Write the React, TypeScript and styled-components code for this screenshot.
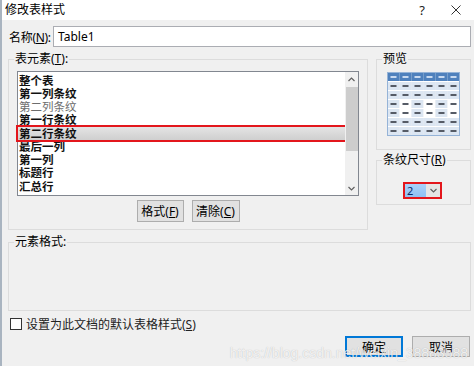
import React from 'react'
import styled, { createGlobalStyle } from 'styled-components'

const GlobalStyle = createGlobalStyle`
  html, body { margin: 0; padding: 0; }
  body { background: #f0f0f0; }
`

const uiFont = `"Noto Sans", "Noto Sans CJK SC", sans-serif`

const Dialog = styled.div`
  position: relative;
  width: 474px;
  height: 366px;
  box-sizing: border-box;
  border-left: 2px solid #a9b4c0;
  background: #f0f0f0;
  font-family: ${uiFont};
  font-size: 12px;
  color: #000;
  display: flex;
  flex-direction: column;
  overflow: hidden;
`

const TitleBar = styled.div`
  height: 20px;
  background: #fff;
  display: flex;
  align-items: center;
  padding: 0 13px 0 3px;
`

const Title = styled.div`
  flex: 1;
  line-height: 20px;
`

const HelpMark = styled.span`
  font-size: 13px;
  color: #222;
  margin-right: 26px;
`

const Body = styled.div`
  display: flex;
  flex-direction: column;
  padding: 6px 3px 0 6px;
`

const NameRow = styled.div`
  display: flex;
  align-items: center;
  height: 21px;
`

const NameLabel = styled.label`
  width: 45px;
  padding-left: 1px;
  box-sizing: border-box;
  white-space: nowrap;
  letter-spacing: -0.3px;
`

const TextInput = styled.div`
  flex: 1;
  height: 21px;
  box-sizing: border-box;
  border: 1px solid #abadb3;
  background: #fff;
  padding-left: 4px;
  line-height: 19px;
`

const Main = styled.div`
  display: flex;
  gap: 8px;
  margin-top: 4px;
  align-items: flex-start;
`

const Group = styled.fieldset<{ $w?: number }>`
  margin: 0;
  min-width: 0;
  box-sizing: border-box;
  ${p => (p.$w ? `width: ${p.$w}px;` : '')}
  border: 1px solid #dcdcdc;
  padding: 4px 8px 7px 8px;
`

const Legend = styled.legend`
  padding: 0 1px;
  margin-left: -3px;
  line-height: 16px;
  font-size: 12px;
  white-space: nowrap;
`

const ListBox = styled.div`
  height: 125px;
  box-sizing: border-box;
  border: 1px solid #828790;
  background: #fff;
  display: flex;
`

const Items = styled.div`
  flex: 1;
  padding-top: 1.5px;
`

const Item = styled.div<{ $dim?: boolean; $selected?: boolean }>`
  height: 13.25px;
  line-height: 13.25px;
  font-size: 11.5px;
  padding-left: 1px;
  font-weight: ${p => (p.$dim ? 400 : 700)};
  color: ${p => (p.$dim ? '#6d6d6d' : '#111')};
  ${p =>
    p.$selected
      ? `
    background: linear-gradient(#e4e4e4, #cfcfcf);
    outline: 2px solid #e3161c;
  `
      : ''}
`

const ScrollBar = styled.div`
  width: 13px;
  background: #f0f0f0;
  display: flex;
  flex-direction: column;
  align-items: center;
`

const ScrollArrow = styled.div`
  height: 14px;
  display: flex;
  align-items: center;
  justify-content: center;
`

const Thumb = styled.div`
  width: 12px;
  height: 64px;
  background: #cdcdcd;
  margin-top: 1px;
`

const ScrollTrack = styled.div`
  flex: 1;
`

const ButtonRow = styled.div<{ $end?: boolean }>`
  display: flex;
  justify-content: ${p => (p.$end ? 'flex-end' : 'center')};
  gap: ${p => (p.$end ? 9 : 8)}px;
`

const Button = styled.button<{ $w: number; $h: number; $default?: boolean }>`
  width: ${p => p.$w}px;
  height: ${p => p.$h}px;
  box-sizing: border-box;
  padding: 0;
  border: 1px solid ${p => (p.$default ? '#0078d7' : '#adadad')};
  ${p => (p.$default ? 'box-shadow: inset 0 0 0 1px #0078d7;' : '')}
  background: #e1e1e1;
  font-family: ${uiFont};
  font-size: 12px;
  color: #000;
`

const FormatButtons = styled(ButtonRow)`
  margin-top: 4px;
`

const RightColumn = styled.div`
  width: 95px;
  display: flex;
  flex-direction: column;
  gap: 2px;
`

const PreviewBox = styled.div`
  display: flex;
  justify-content: center;
  padding: 1px 0 6px;
  margin-left: -1px;
`

const ComboWrap = styled.div`
  display: flex;
  justify-content: center;
  padding: 12px 0 0;
  margin-left: -2px;
`

const Combo = styled.div`
  display: flex;
  width: 35px;
  height: 13px;
  outline: 2px solid #e3161c;
  background: #fff;
`

const ComboValue = styled.div`
  width: 21px;
  background: linear-gradient(#a9d1fb, #8fc1f3);
  font-size: 11px;
  line-height: 13px;
  padding-left: 2px;
  box-sizing: border-box;
  color: #0a2a66;
`

const ComboArrow = styled.div`
  flex: 1;
  background: #e5e5e5;
  display: flex;
  align-items: center;
  justify-content: center;
`

const FormatGroup = styled(Group)`
  margin-top: 4px;
  height: 77px;
`

const CheckRow = styled.div`
  display: flex;
  align-items: center;
  margin-top: 7px;
  height: 12px;
  padding-left: 2px;
`

const CheckBox = styled.div`
  width: 12px;
  height: 12px;
  box-sizing: border-box;
  border: 1px solid #333;
  background: #fff;
  margin-right: 4px;
`

const CheckLabel = styled.span`
  color: #222;
`

const DialogButtons = styled(ButtonRow)`
  margin-top: 6px;
  padding-right: 1px;
`

const Watermark = styled.div`
  position: absolute;
  right: 6px;
  bottom: 5px;
  font-family: "Liberation Sans", sans-serif;
  font-size: 14px;
  color: rgba(255, 255, 255, 0.8);
  text-shadow: 0 0 1px rgba(0, 0, 0, 0.25);
  pointer-events: none;
`

const Chevron: React.FC<{ up?: boolean }> = ({ up }) => (
  <svg width="7" height="5" viewBox="0 0 7 5">
    <path
      d={up ? 'M0.5 4 L3.5 1 L6.5 4' : 'M0.5 1 L3.5 4 L6.5 1'}
      fill="none"
      stroke="#606060"
      strokeWidth="1.2"
    />
  </svg>
)

const CloseIcon = () => (
  <svg width="10" height="10" viewBox="0 0 10 10">
    <path d="M0.5 0.5 L9.5 9.5 M9.5 0.5 L0.5 9.5" stroke="#333" strokeWidth="1" />
  </svg>
)

const PreviewTable = () => {
  const cols = 6
  const cw = 12
  const rh = 9
  const cells: React.ReactNode[] = []
  for (let r = 0; r < 7; r++) {
    for (let c = 0; c < cols; c++) {
      const x = 0.5 + c * cw
      const y = 0.5 + r * rh
      let fill = '#dce6f2'
      if (r === 0) fill = '#4f81bd'
      else if ((r === 3 || r === 4) && c % 2 === 1) fill = '#ffffff'
      cells.push(<rect key={`r${r}c${c}`} x={x} y={y} width={cw} height={rh} fill={fill} />)
      cells.push(
        <rect
          key={`d${r}c${c}`}
          x={x + 3}
          y={y + 3.5}
          width={6}
          height={2}
          fill={r === 0 ? '#c9daf0' : '#555b66'}
        />
      )
    }
    if (r > 0) {
      cells.push(
        <line key={`l${r}`} x1={0.5} x2={72.5} y1={0.5 + r * rh} y2={0.5 + r * rh} stroke="#ffffff" strokeWidth="1" />
      )
    }
  }
  return (
    <svg width="73" height="64" viewBox="0 0 73 64">
      {cells}
      <rect x={0.5} y={0.5} width={72} height={63} fill="none" stroke="#95b3d7" strokeWidth="1" />
    </svg>
  )
}

const elements = [
  { label: '整个表' },
  { label: '第一列条纹' },
  { label: '第二列条纹', dim: true },
  { label: '第一行条纹' },
  { label: '第二行条纹', selected: true },
  { label: '最后一列' },
  { label: '第一列' },
  { label: '标题行' },
  { label: '汇总行' },
]

export default function App() {
  return (
    <>
      <GlobalStyle />
      <Dialog>
        <TitleBar>
          <Title>修改表样式</Title>
          <HelpMark>?</HelpMark>
          <CloseIcon />
        </TitleBar>
        <Body>
          <NameRow>
            <NameLabel>
              名称(<u>N</u>):
            </NameLabel>
            <TextInput>Table1</TextInput>
          </NameRow>
          <Main>
            <Group $w={360}>
              <Legend>
                表元素(<u>T</u>):
              </Legend>
              <ListBox>
                <Items>
                  {elements.map(e => (
                    <Item key={e.label} $dim={e.dim} $selected={e.selected}>
                      {e.label}
                    </Item>
                  ))}
                </Items>
                <ScrollBar>
                  <ScrollArrow>
                    <Chevron up />
                  </ScrollArrow>
                  <Thumb />
                  <ScrollTrack />
                  <ScrollArrow>
                    <Chevron />
                  </ScrollArrow>
                </ScrollBar>
              </ListBox>
              <FormatButtons>
                <Button $w={47} $h={22}>
                  格式(<u>F</u>)
                </Button>
                <Button $w={48} $h={22}>
                  清除(<u>C</u>)
                </Button>
              </FormatButtons>
            </Group>
            <RightColumn>
              <Group>
                <Legend>预览</Legend>
                <PreviewBox>
                  <PreviewTable />
                </PreviewBox>
              </Group>
              <Group>
                <Legend>
                  条纹尺寸(<u>R</u>)
                </Legend>
                <ComboWrap>
                  <Combo>
                    <ComboValue>2</ComboValue>
                    <ComboArrow>
                      <Chevron />
                    </ComboArrow>
                  </Combo>
                </ComboWrap>
              </Group>
            </RightColumn>
          </Main>
          <FormatGroup>
            <Legend>元素格式:</Legend>
          </FormatGroup>
          <CheckRow>
            <CheckBox />
            <CheckLabel>
              设置为此文档的默认表格样式(<u>S</u>)
            </CheckLabel>
          </CheckRow>
          <DialogButtons $end>
            <Button $w={58} $h={21} $default>
              确定
            </Button>
            <Button $w={58} $h={21}>
              取消
            </Button>
          </DialogButtons>
        </Body>
        <Watermark>https://blog.csdn.net/weixin_38883588</Watermark>
      </Dialog>
    </>
  )
}
